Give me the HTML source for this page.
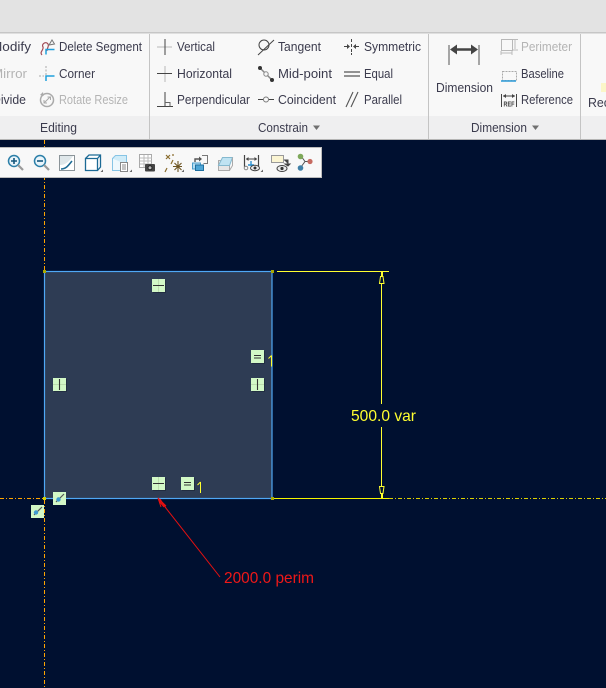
<!DOCTYPE html>
<html><head><meta charset="utf-8">
<style>
html,body{margin:0;padding:0;background:#001030;width:606px;height:688px;overflow:hidden}
svg{display:block}
.t{font:12.5px "Liberation Sans",sans-serif;fill:#3b3b4d}
.d{fill:#b4b4b4}
.c{font:16px "Liberation Sans",sans-serif;fill:#ffff30}
</style></head><body>
<svg width="606" height="688" viewBox="0 0 606 688" xmlns="http://www.w3.org/2000/svg">
<rect width="606" height="688" fill="#001030"/>
<!-- top -->
<rect width="606" height="32" fill="#e3e3e3"/>
<rect y="32" width="606" height="1.5" fill="#c6c6c6"/>
<rect y="33.5" width="606" height="82.5" fill="#f8f8f8"/>
<rect y="116" width="606" height="23" fill="#efeff0"/>
<rect y="139" width="606" height="1" fill="#b5b5b5"/>
<rect x="149" y="34" width="1" height="105" fill="#c4c4c4"/>
<rect x="428" y="34" width="1" height="105" fill="#c4c4c4"/>
<rect x="580" y="34" width="1" height="105" fill="#c4c4c4"/>

<!-- ribbon text -->
<g lengthAdjust="spacingAndGlyphs">
<text class="t" lengthAdjust="spacingAndGlyphs" x="-9" y="51" textLength="40">Modify</text>
<text class="t d" lengthAdjust="spacingAndGlyphs" x="-8" y="78" textLength="35">Mirror</text>
<text class="t" lengthAdjust="spacingAndGlyphs" x="-8" y="104" textLength="34">Divide</text>
<text class="t" lengthAdjust="spacingAndGlyphs" x="59" y="51" textLength="83">Delete Segment</text>
<text class="t" lengthAdjust="spacingAndGlyphs" x="59" y="78" textLength="36">Corner</text>
<text class="t d" lengthAdjust="spacingAndGlyphs" x="59" y="104" textLength="69">Rotate Resize</text>
<text class="t" lengthAdjust="spacingAndGlyphs" x="40" y="132" textLength="37">Editing</text>
<text class="t" lengthAdjust="spacingAndGlyphs" x="177" y="51" textLength="38">Vertical</text>
<text class="t" lengthAdjust="spacingAndGlyphs" x="177" y="78" textLength="55">Horizontal</text>
<text class="t" lengthAdjust="spacingAndGlyphs" x="177" y="104" textLength="73">Perpendicular</text>
<text class="t" lengthAdjust="spacingAndGlyphs" x="278" y="51" textLength="43">Tangent</text>
<text class="t" lengthAdjust="spacingAndGlyphs" x="278" y="78" textLength="54">Mid-point</text>
<text class="t" lengthAdjust="spacingAndGlyphs" x="278" y="104" textLength="58">Coincident</text>
<text class="t" lengthAdjust="spacingAndGlyphs" x="258" y="132" textLength="50">Constrain</text>
<text class="t" lengthAdjust="spacingAndGlyphs" x="364" y="51" textLength="57">Symmetric</text>
<text class="t" lengthAdjust="spacingAndGlyphs" x="364" y="78" textLength="29">Equal</text>
<text class="t" lengthAdjust="spacingAndGlyphs" x="364" y="104" textLength="38">Parallel</text>
<text class="t" lengthAdjust="spacingAndGlyphs" x="436" y="92" textLength="57">Dimension</text>
<text class="t d" lengthAdjust="spacingAndGlyphs" x="521" y="51" textLength="51">Perimeter</text>
<text class="t" lengthAdjust="spacingAndGlyphs" x="521" y="78" textLength="43">Baseline</text>
<text class="t" lengthAdjust="spacingAndGlyphs" x="521" y="104" textLength="52">Reference</text>
<text class="t" lengthAdjust="spacingAndGlyphs" x="471" y="132" textLength="56">Dimension</text>
<text class="t" lengthAdjust="spacingAndGlyphs" x="588" y="107" textLength="22">Rec</text>
</g>
<path d="M313 125.500h7l-3.500 4.500z M532 125.500h7l-3.500 4.500z" fill="#707070"/>
<rect x="601" y="83" width="5" height="9" fill="#fbf6c8"/>

<!-- editing icons -->
<g fill="none">
<path d="M42 55c-3-3 2-5 1-8c-2-3 3-6 5-3c1.500 2-1.500 5-1 7" stroke="#a04a55" stroke-width="1.200"/>
<path d="M49 45l3-5l2.500 4z" stroke="#777"/>
<path d="M46 54.500v-5h8.500" stroke="#1f9fdc" stroke-width="1.500"/>
<path d="M46 66v9M39 76h5" stroke="#aaa" stroke-dasharray="2 1.500"/>
<path d="M46 81v-5h8.500" stroke="#1f9fdc" stroke-width="1.500"/>
<circle cx="47" cy="100" r="6.500" stroke="#aaa" stroke-width="1.500"/>
<path d="M44 103l6-6M47.500 97h3v3M44 100v3h3" stroke="#aaa"/>
<path d="M40 95l3.500 1l-.5-4z" fill="#aaa"/>
<!-- constrain -->
<path d="M157 47h15" stroke="#b8b8b8"/>
<path d="M165 39v16" stroke="#444"/>
<path d="M165 66v16" stroke="#b8b8b8"/>
<path d="M157 73.500h15" stroke="#444"/>
<path d="M165 92v14M157 106.500h16" stroke="#444"/>
<path d="M165 102.500h5v4" stroke="#666"/>
<circle cx="264" cy="45" r="5" stroke="#444"/>
<path d="M258 55l16-15" stroke="#444"/>
<path d="M259 67l14 14" stroke="#888" stroke-width="1.500"/>
<circle cx="260" cy="68" r="2" fill="#333"/><circle cx="272" cy="80" r="2" fill="#333"/>
<circle cx="266" cy="74" r="2.200" fill="#f8f8f8" stroke="#888"/>
<path d="M258 99.500h5M269 99.500h5" stroke="#444"/>
<circle cx="266" cy="99.500" r="2.500" stroke="#777"/>
<path d="M351.500 39v3M351.500 44v3M351.500 49v3M351.500 53v2" stroke="#444"/>
<path d="M344 46.500h5M354 46.500h5" stroke="#444"/>
<path d="M350 46.500l-3-2.500v5zM353 46.500l3-2.500v5z" fill="#444"/>
<path d="M344 72h16M344 76h16" stroke="#555" stroke-width="1.200"/>
<path d="M346 107l7-15M351 107l7-15" stroke="#555" stroke-width="1.100"/>
<!-- dimension -->
<path d="M449 45v20M479 45v20" stroke="#555" stroke-width="1"/>
<path d="M452 49.500h24" stroke="#444" stroke-width="2.500"/>
<path d="M450 49.500l7-5v10zM478 49.500l-7-5v10z" fill="#444"/>
<rect x="501.500" y="39.500" width="11" height="11" stroke="#b8b8b8"/>
<path d="M515 40v9M513 39.500h5M513 50h5M501 53h11M501 51v4M512 51v4" stroke="#bbb"/>
<rect x="502.500" y="71.500" width="14" height="9" stroke="#aaa" stroke-dasharray="2 1"/>
<path d="M501 81h15" stroke="#2a9ad9" stroke-width="1.500"/>
<path d="M501.500 94v13M516.500 94v13M503 96h12" stroke="#444"/>
<path d="M503 96l3-2v4zM515 96l-3-2v4z" fill="#444"/>
<text x="503.500" y="106.500" font-family="Liberation Sans" font-size="7" font-weight="bold" fill="#444" textLength="11" lengthAdjust="spacingAndGlyphs">REF</text>
</g>

<!-- canvas lines under toolbar -->
<path d="M44.500 140V688" stroke="#ffa500" stroke-dasharray="4 2 1 2"/>

<!-- toolbar -->
<rect x="-1" y="147.500" width="322.500" height="30" fill="#f8f8f8" stroke="#bcbcbc"/>
<g fill="none">
<circle cx="14" cy="161" r="5.500" fill="#eaf5fb" stroke="#2b7fa8" stroke-width="1.500"/>
<path d="M11 161h6M14 158v6" stroke="#14577d" stroke-width="1.600"/>
<path d="M18 165l5 5" stroke="#9a9a9a" stroke-width="2.200"/>
<circle cx="40" cy="161" r="5.500" fill="#eaf5fb" stroke="#2b7fa8" stroke-width="1.500"/>
<path d="M37 161h6" stroke="#14577d" stroke-width="1.600"/>
<path d="M44 165l5 5" stroke="#9a9a9a" stroke-width="2.200"/>
<rect x="59.500" y="155.500" width="15" height="15" fill="#dfe7ea" stroke="#8b9499"/>
<path d="M60 170l0-5c5 0 9-3 13-9l1 0v14z" fill="#fff"/>
<path d="M61 169c5 0 7-3 11-8" stroke="#1f6d96" stroke-width="1.600"/>
<path d="M85.500 158.500h12v12h-12zM85.500 158.500l3.500-3.500h11.500v12l-3 3.500M97.500 158.500l3-3.500" fill="#fff" stroke="#1c6a95" stroke-width="1.300"/>
<path d="M103 172h-2.500l2.500-2.500z" fill="#666"/>
<path d="M112.500 158.500h11v12h-11z" fill="#eef8fd" stroke="#86c4e5"/>
<path d="M112.500 158.500l3-3h11v9" fill="#d0ecf8" stroke="#86c4e5"/>
<rect x="120.500" y="162.500" width="7" height="9" fill="#fff" stroke="#888"/>
<path d="M122 165h4M122 167h4M122 169h4" stroke="#888"/>
<path d="M132 172h-2.500l2.500-2.500z" fill="#666"/>
<rect x="139.500" y="154.500" width="12" height="13" fill="#fff" stroke="#aaa"/>
<path d="M140 158h12M140 161h12M140 164h12M144 155v12M148 155v12" stroke="#bbb"/>
<rect x="145" y="164" width="10" height="7.500" rx="1" fill="#444"/>
<circle cx="150" cy="167.800" r="2" fill="#bbb" stroke="#222"/>
<path d="M166 155l4 4M170 155l-4 4M172 155l2 0M173 160l-2 4M167 168l-2 4" stroke="#8a6d2e" stroke-width="1.200"/>
<path d="M178 161v11M173 166.500h9M174.500 163l7 7M181.500 163l-7 7" stroke="#6d5524" stroke-width="1.100"/>
<path d="M184 172h-2.500l2.500-2.500z" fill="#666"/>
<path d="M202 155.500h5.500v8h-4" stroke="#777"/>
<path d="M195 162v-3h5" stroke="#555" stroke-width="1.400"/>
<path d="M199 156.500l3 2.500l-3 2.500z" fill="#555"/>
<path d="M192.500 163h8v6h-8z" fill="#b7def2" stroke="#4b9cc9"/>
<path d="M195.500 165h8v5.500h-8z" fill="#4ea5d5" stroke="#1e6e9e"/>
<path d="M218.500 160.500h11v10h-11z" fill="#e6e6e6" stroke="#aaa"/>
<path d="M218.500 165.500l4-8h10l-3 8h-11z" fill="#bfe3f2" stroke="#85b9cf"/>
<path d="M229.500 170.500l3-5v-8" stroke="#aaa"/>
<path d="M244.500 155v12M258.500 155v12" stroke="#444" stroke-width="1.200"/>
<path d="M246 159h11" stroke="#444"/>
<path d="M246 159l2.500-2v4zM257 159l-2.500-2v4z" fill="#444"/>
<path d="M248 165h6M251 161v5" stroke="#2a90d0" stroke-width="1.400"/>
<circle cx="246" cy="168" r="1.800" stroke="#888"/>
<ellipse cx="255" cy="168" rx="4.500" ry="2.800" fill="#eee" stroke="#444"/>
<circle cx="255" cy="168" r="1.500" fill="#333"/>
<path d="M263 172h-2.500l2.500-2.500z" fill="#666"/>
<rect x="271.500" y="155.500" width="12" height="7" fill="#fbf5d3" stroke="#999"/>
<path d="M284 160h4v4M285 164h5l-2 2z" stroke="#444" fill="#444"/>
<ellipse cx="282" cy="168.500" rx="5" ry="3" fill="#eee" stroke="#444"/>
<circle cx="282" cy="168.500" r="1.600" fill="#333"/>
<path d="M301 156l4 5.500l-4 5.500M305 161.500h5" stroke="#555"/>
<circle cx="300.500" cy="156.500" r="2.800" fill="#7ea85a"/>
<circle cx="300.500" cy="168" r="2.800" fill="#3f7fa6"/>
<circle cx="310" cy="161.500" r="2.600" fill="#c66a60"/>
</g>

<!-- sketch -->
<rect x="44.500" y="271.500" width="227.500" height="227" fill="#2e3c54"/>
<path d="M0 498.500H44" stroke="#ffa500" stroke-dasharray="4 2 1 2"/>
<path d="M272 498.500H389" stroke="#f4f400"/>
<path d="M389 498.500H606" stroke="#ddd000" stroke-dasharray="4 2 1 2"/>
<path d="M277 271.500H389" stroke="#ffff30" stroke-width="1"/>
<path d="M381.500 272V404M381.500 427V498" stroke="#ffff30"/>
<path d="M382 272v4.500M382 493v5" stroke="#ffff30" stroke-width="2"/>
<path d="M379.500 283.500h4.500l-1-7h-2.500zM379.500 486.500h4.500l-1 7h-2.500z" fill="#001030" stroke="#ffff30"/>
<rect x="44.500" y="271.500" width="227.500" height="227" fill="none" stroke="#4fa8f5" stroke-width="1.200"/>
<rect x="43" y="270" width="3" height="3" fill="#a8a800"/>
<rect x="271" y="270" width="3" height="3" fill="#a8a800"/>
<rect x="271" y="497" width="3" height="3" fill="#a8a800"/>
<rect x="43" y="497" width="3" height="3" fill="#d0d000"/>

<!-- constraint glyphs -->
<g>
<g fill="#141c2c" opacity=".45">
<rect x="153" y="280" width="13" height="13"/>
<rect x="252" y="351" width="13" height="13"/>
<rect x="54" y="379" width="13" height="13"/>
<rect x="252" y="379" width="13" height="13"/>
<rect x="153" y="478" width="13" height="13"/>
<rect x="182" y="478" width="13" height="13"/>
</g>
<g fill="#d2f8c6">
<rect x="152" y="279" width="13" height="13"/>
<rect x="251" y="350" width="13" height="13"/>
<rect x="53" y="378" width="13" height="13"/>
<rect x="251" y="378" width="13" height="13"/>
<rect x="152" y="477" width="13" height="13"/>
<rect x="181" y="477" width="13" height="13"/>
<rect x="53" y="492" width="13" height="13"/>
<rect x="31" y="505" width="13" height="13"/>
</g>
<path d="M158.500 279v13M53 384.500h13M251 384.500h13M158.500 477v13" stroke="#bcdcae"/>
<path d="M153 285.500h11M59.500 379v11M257.500 379v11M153 483.500h11" stroke="#333" stroke-width="1.100"/>
<path d="M254 355.500h7M254 358h7M184 482.500h7M184 485h7" stroke="#333" stroke-width="1"/>
<path d="M56 502l8-8M34 515l8-8" stroke="#555" stroke-width="1.200"/>
<circle cx="58.500" cy="499.500" r="2.200" fill="#3d9ad0"/>
<circle cx="36" cy="512.500" r="2.200" fill="#3d9ad0"/>
</g>
<path d="M271.500 355.500v11M271.500 355.500l-3 3M200.500 482v11M200.500 482l-3 3" stroke="#ffff30" fill="none"/>

<!-- arrow -->
<path d="M158 498L220 577" stroke="#e81010" stroke-width="1"/>
<path d="M158 498l8 8M158 498l3 9M160 499l6 9M159 501l5 6" stroke="#e81010" stroke-width="1" fill="none"/>

<text class="c" lengthAdjust="spacingAndGlyphs" x="351" y="421" textLength="65">500.0 var</text>
<text class="c" lengthAdjust="spacingAndGlyphs" x="224" y="583" textLength="90" style="fill:#f01818">2000.0 perim</text>
</svg>
</body></html>
